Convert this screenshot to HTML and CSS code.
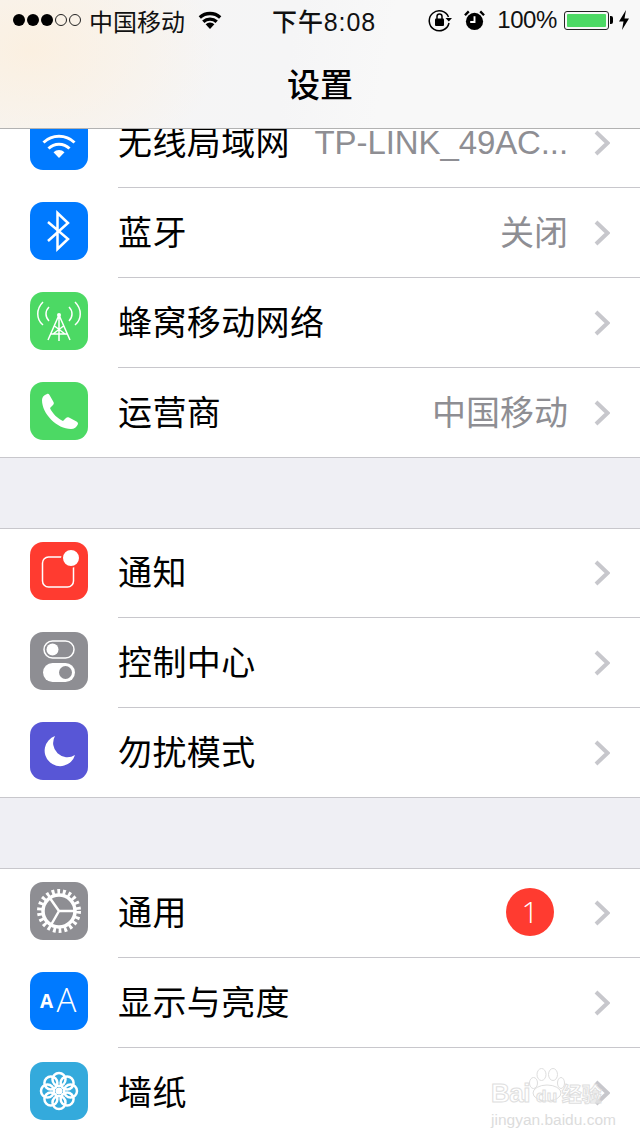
FILE: index.html
```html
<!DOCTYPE html>
<html lang="zh-CN">
<head>
<meta charset="utf-8">
<title>设置</title>
<link rel="stylesheet" href="styles.css">
</head>
<body>
<div class="screen">
  <header class="nav">
    <div class="status">
      <div class="status-left">
        <span class="dots"><i class="dot"></i><i class="dot"></i><i class="dot"></i><i class="dot off"></i><i class="dot off"></i></span>
        <span class="carrier">中国移动</span>
        <svg class="st-wifi" viewBox="0 0 24 18"><path d="M12 18 7.600 13.200a6.600 6.600 0 0 1 8.800 0Z"/><path d="M5.300 10.700a10 10 0 0 1 13.400 0" class="arc"/><path d="M1.800 6.400a15.400 15.400 0 0 1 20.400 0" class="arc"/></svg>
      </div>
      <span class="time">下午8:08</span>
      <div class="status-right">
        <svg class="st-lock" viewBox="0 0 24 24"><path class="ring" d="M20.500 9A10 10 0 1 0 21 15"/><path d="M17.500 10h6.500l-3.200 3.600Z"/><rect x="7" y="10.500" width="9" height="7.500" rx="1"/><path class="ring" d="M9 11V8.500a2.500 2.500 0 0 1 5 0V11"/></svg>
        <svg class="st-alarm" viewBox="0 0 22 22"><circle cx="11" cy="12" r="9"/><path d="M11 6.500V12.500H6.500" class="hand"/><path d="M1 5.500 5 1.500M21 5.500 17 1.500" class="bell"/></svg>
        <span class="percent">100%</span>
        <span class="battery"><span class="level"></span></span>
        <svg class="st-bolt" viewBox="0 0 12 20"><path d="M8 0 1 11.500H5.500L4 20 11 8.500H6.500Z"/></svg>
      </div>
    </div>
    <h1 class="title">设置</h1>
  </header>

  <main class="list">
    <section class="group">
      <div class="row">
        <span class="icon blue"><svg viewBox="0 0 58 58"><path class="i-fill" d="M29 46 23.500 40.300a8 8 0 0 1 11 0Z"/><path class="i-line w3" d="M18.500 36.500a15 15 0 0 1 21 0"/><path class="i-line w3" d="M13.500 30.500a22.500 22.500 0 0 1 31 0"/></svg></span>
        <div class="body"><span class="label">无线局域网</span><span class="value latin">TP-LINK_49AC...</span><svg class="chev" viewBox="0 0 16 26"><path d="M2 2 13.500 13 2 24"/></svg></div>
      </div>
      <div class="row">
        <span class="icon blue"><svg viewBox="0 0 58 58"><path class="i-line w25" d="M18 20 38 37 27.500 47V11L38 21 18 39"/></svg></span>
        <div class="body"><span class="label">蓝牙</span><span class="value">关闭</span><svg class="chev" viewBox="0 0 16 26"><path d="M2 2 13.500 13 2 24"/></svg></div>
      </div>
      <div class="row">
        <span class="icon green"><svg viewBox="0 0 58 58"><path class="i-line w15" d="M13 10C6 17 6 27 13 33M19 15C15 19 15 25 19 29M45 10C52 17 52 27 45 33M39 15C43 19 43 25 39 29"/><circle class="i-fill" cx="29" cy="23" r="2"/><path class="i-line w15" d="M29 23V49M29 23 18 48M29 23 40 48M24.500 34 35 42M33.500 34 23 42M21 42 37 42"/></svg></span>
        <div class="body"><span class="label">蜂窝移动网络</span><svg class="chev" viewBox="0 0 16 26"><path d="M2 2 13.500 13 2 24"/></svg></div>
      </div>
      <div class="row">
        <span class="icon green"><svg viewBox="0 0 58 58"><path class="i-fill" d="M17 12C14 13 12 15 12 18 12 32 27 47 41 47 44 47 47 45 48 42 48 41 47.500 40 46.500 39.500L39 35.500C38 35 37 35 36 36L33 39C28 37 22 31 20 26L23 23C24 22 24 21 23.500 20L19.500 13C19 12 18 11.600 17 12Z"/></svg></span>
        <div class="body"><span class="label">运营商</span><span class="value">中国移动</span><svg class="chev" viewBox="0 0 16 26"><path d="M2 2 13.500 13 2 24"/></svg></div>
      </div>
    </section>

    <section class="group">
      <div class="row">
        <span class="icon red"><svg viewBox="0 0 58 58"><rect class="i-line w15" x="12.500" y="15" width="31" height="30" rx="6"/><circle class="i-fill ring-red" cx="41" cy="16" r="9"/></svg></span>
        <div class="body"><span class="label">通知</span><svg class="chev" viewBox="0 0 16 26"><path d="M2 2 13.500 13 2 24"/></svg></div>
      </div>
      <div class="row">
        <span class="icon gray"><svg viewBox="0 0 58 58"><rect class="i-line w15" x="14" y="9" width="30" height="17" rx="8.500"/><circle class="i-fill" cx="22.500" cy="17.500" r="6"/><rect class="i-fill" x="13" y="31" width="32" height="19" rx="9.500"/><circle class="knob" cx="35.500" cy="40.500" r="6.500"/></svg></span>
        <div class="body"><span class="label">控制中心</span><svg class="chev" viewBox="0 0 16 26"><path d="M2 2 13.500 13 2 24"/></svg></div>
      </div>
      <div class="row">
        <span class="icon indigo"><svg viewBox="0 0 58 58"><path class="i-fill" d="M25 14A15.500 15.500 0 1 0 45 33 14.200 14.200 0 0 1 25 14Z"/></svg></span>
        <div class="body"><span class="label">勿扰模式</span><svg class="chev" viewBox="0 0 16 26"><path d="M2 2 13.500 13 2 24"/></svg></div>
      </div>
    </section>

    <section class="group">
      <div class="row">
        <span class="icon gray"><svg viewBox="0 0 58 58"><circle class="teeth" cx="29" cy="29" r="19.500"/><circle class="i-line w35" cx="29" cy="29" r="16"/><path class="i-line w25" d="M29 29 19.500 15.500M29 29H45M29 29 21 43"/></svg></span>
        <div class="body"><span class="label">通用</span><span class="badge">1</span><svg class="chev" viewBox="0 0 16 26"><path d="M2 2 13.500 13 2 24"/></svg></div>
      </div>
      <div class="row">
        <span class="icon blue"><svg viewBox="0 0 58 58"><text class="aa-s" x="10" y="36">A</text><text class="aa-l" x="26.500" y="40">A</text></svg></span>
        <div class="body"><span class="label">显示与亮度</span><svg class="chev" viewBox="0 0 16 26"><path d="M2 2 13.500 13 2 24"/></svg></div>
      </div>
      <div class="row">
        <span class="icon sky"><svg viewBox="0 0 58 58"><g class="i-line w25"><circle cx="29" cy="17.500" r="6.500"/><circle cx="29" cy="40.500" r="6.500"/><circle cx="17.500" cy="29" r="6.500"/><circle cx="40.500" cy="29" r="6.500"/><circle cx="20.900" cy="20.900" r="6.500"/><circle cx="37.100" cy="20.900" r="6.500"/><circle cx="20.900" cy="37.100" r="6.500"/><circle cx="37.100" cy="37.100" r="6.500"/></g><circle class="i-fill" cx="29" cy="29" r="3.500"/></svg></span>
        <div class="body"><span class="label">墙纸</span><svg class="chev" viewBox="0 0 16 26"><path d="M2 2 13.500 13 2 24"/></svg></div>
      </div>
    </section>
  </main>

  <div class="watermark">
    <svg class="paw" viewBox="0 0 36 34"><ellipse cx="18" cy="25" rx="14" ry="8"/><ellipse cx="4.500" cy="15" rx="4" ry="5.500"/><ellipse cx="12.500" cy="6.500" rx="4.500" ry="6"/><ellipse cx="24" cy="6.500" rx="4.500" ry="6"/><ellipse cx="32" cy="15" rx="3.500" ry="5.500"/></svg>
    <div class="wm-main"><span class="wm-bai">Bai</span><span class="wm-du">du</span><span class="wm-cn">经验</span></div>
    <div class="wm-sub">jingyan.baidu.com</div>
  </div>
</div>
</body>
</html>
```
FILE: styles.css
```css
* { box-sizing: border-box; }
html, body { margin: 0; padding: 0; }
body {
  background: #efeff4;
  font-family: "Liberation Sans", "Noto Sans CJK SC", sans-serif;
  color: #000;
}
.screen {
  position: relative;
  width: 640px;
  height: 1136px;
  overflow: hidden;
  background: #efeff4;
}

/* Translucent nav bar lying over the scrolled list */
.nav {
  position: relative;
  z-index: 2;
  height: 129px;
  border-bottom: 1px solid #b2b2b2;
  background:
    radial-gradient(ellipse 190px 130px at 30px 50px, #fbf0e1 0%, rgba(251,240,225,0) 100%),
    linear-gradient(100deg, #f6f5f4 0%, #f5f5f6 45%, #f8f8f8 60%);
}
.status {
  display: flex;
  align-items: center;
  height: 40px;
  padding: 0 10px 0 13px;
  font-size: 24px;
  color: #111;
}
.status-left { display: flex; align-items: center; }
.dots { display: flex; gap: 2px; }
.dot { width: 12px; height: 12px; border-radius: 50%; background: #000; }
.dot.off { background: transparent; border: 1px solid #222; }
.carrier { margin-left: 8px; }
.st-wifi { width: 24px; height: 18px; margin-left: 13px; fill: #000; }
.st-wifi .arc { fill: none; stroke: #000; stroke-width: 3.4; }
.time { margin-left: 50px; font-size: 25px; font-weight: 500; letter-spacing: .9px; }
.status-right { display: flex; align-items: center; margin-left: auto; }
.st-lock { width: 24px; height: 24px; fill: #000; }
.st-lock .ring { fill: none; stroke: #000; stroke-width: 1.5; }
.st-alarm { width: 21px; height: 21px; margin-left: 12px; fill: #000; }
.st-alarm .hand { fill: none; stroke: #fff; stroke-width: 2; }
.st-alarm .bell { fill: none; stroke: #000; stroke-width: 2.5; }
.percent { margin-left: 12px; font-size: 24px; letter-spacing: -.4px; }
.battery {
  position: relative;
  display: block;
  width: 45px;
  height: 19px;
  margin-left: 7px;
  padding: 2px;
  border: 1px solid #222;
  border-radius: 3px;
}
.battery::after {
  content: "";
  position: absolute;
  top: 4px;
  right: -5px;
  width: 3px;
  height: 8px;
  border-radius: 0 2px 2px 0;
  background: #000;
}
.level { display: block; height: 100%; border-radius: 1px; background: #4cd964; }
.st-bolt { width: 12px; height: 20px; margin-left: 9px; fill: #000; }
.title {
  margin: 0;
  padding-top: 22px;
  font-size: 33px;
  line-height: 48px;
  font-weight: 500;
  text-align: center;
}

/* Settings list */
.list { margin-top: -31px; }
.group {
  margin-bottom: 70px;
  background: #fff;
  border-top: 1px solid #c8c7cc;
  border-bottom: 1px solid #c8c7cc;
}
.row { display: flex; height: 90px; padding-left: 30px; }
.row:first-child { margin-top: -1px; }
.row:last-child { margin-bottom: -1px; }
.icon {
  flex: none;
  display: block;
  width: 58px;
  height: 58px;
  margin-top: 14px;
  border-radius: 13px;
}
.icon svg { display: block; width: 58px; height: 58px; }
.blue { background: #007aff; }
.green { background: #4cd964; }
.red { background: #ff3b30; }
.gray { background: #8e8e93; }
.indigo { background: #5856d6; }
.sky { background: #34aadc; }

.i-fill { fill: #fff; }
.i-line { fill: none; stroke: #fff; }
.w15 { stroke-width: 1.5; }
.w25 { stroke-width: 2.5; }
.w3 { stroke-width: 3; }
.w35 { stroke-width: 3.5; }
.ring-red { stroke: #ff3b30; stroke-width: 2; }
.knob { fill: #8e8e93; }
.teeth { fill: none; stroke: #fff; stroke-width: 5; stroke-dasharray: 2.8 2.8; }
.aa-s { fill: #fff; font-size: 19px; font-weight: 700; font-family: "Open Sans", sans-serif; }
.aa-l { fill: #fff; font-size: 33px; font-family: "Open Sans", sans-serif; font-weight: 300; }

.body {
  flex: 1;
  display: flex;
  align-items: center;
  margin-left: 30px;
  padding: 0 30px 3px 0;
  border-bottom: 1px solid #c8c7cc;
}
.row:last-child .body { border-bottom: 0; padding-bottom: 4px; }
.label { flex: 1; padding-top: 4px; font-size: 34px; letter-spacing: .4px; line-height: 48px; white-space: nowrap; }
.value { padding-top: 4px; font-size: 34px; line-height: 48px; color: #8e8e93; margin-right: 26px; white-space: nowrap; }
.latin { font-size: 33px; letter-spacing: -.1px; }
.chev { flex: none; width: 16px; height: 26px; fill: none; stroke: #c7c7cc; stroke-width: 4; margin-top: 4px; }
.badge {
  width: 48px;
  height: 48px;
  margin-top: 2px;
  margin-right: 40px;
  border-radius: 50%;
  background: #ff3b30;
  color: #fff;
  font-family: "Open Sans", sans-serif;
  font-weight: 300;
  font-size: 30px;
  line-height: 48px;
  text-align: center;
}

/* Site watermark stamped on the photo */
.watermark {
  position: absolute;
  left: 491px;
  top: 1068px;
  width: 116px;
  height: 56px;
  color: rgba(255, 255, 255, .45);
  -webkit-text-stroke: 1px #dedede;
}
.paw {
  position: absolute;
  left: 38px;
  top: 0;
  width: 36px;
  height: 34px;
  fill: rgba(255, 255, 255, .45);
  stroke: #dedede;
  stroke-width: 1;
}
.wm-main {
  position: relative;
  display: flex;
  align-items: baseline;
  padding-top: 12px;
  font-weight: 700;
  line-height: 26px;
  white-space: nowrap;
}
.wm-bai { font-size: 26px; letter-spacing: -.5px; }
.wm-du { margin: 0 4px 0 6px; font-size: 17px; letter-spacing: .5px; }
.wm-cn { font-size: 20px; }
.wm-sub {
  position: relative;
  margin-top: 2px;
  font-size: 15.5px;
  line-height: 16px;
  color: #dcdcdc;
  -webkit-text-stroke: 0;
  white-space: nowrap;
}
```
